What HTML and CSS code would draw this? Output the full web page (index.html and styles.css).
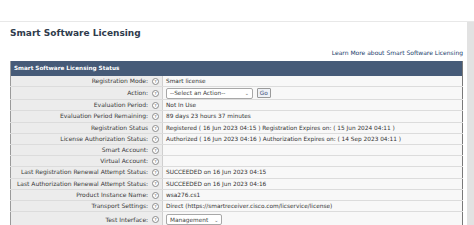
FILE: index.html
```html
<!DOCTYPE html>
<html>
<head>
    <title>Smart Software Licensing</title>
    <link rel="stylesheet" href="styles.css">
</head>
<body>
    <div class="topbar"></div>
    <div class="page">
        <div class="main">
            <h2 class="title">Smart Software Licensing</h2>
            <div class="learn-more"><a href="#">Learn More about Smart Software Licensing</a></div>
            <table class="status-table">
                <tr><th colspan="2" class="table-head">Smart Software Licensing Status</th></tr>
                <tr>
                    <td class="label">Registration Mode: <span class="help">?</span></td>
                    <td class="value">Smart license</td>
                </tr>
                <tr class="select-row">
                    <td class="label">Action: <span class="help">?</span></td>
                    <td class="value">
                        <span class="select action-select">--Select an Action--<span class="caret">&#8964;</span></span>
                        <span class="go-btn">Go</span>
                    </td>
                </tr>
                <tr>
                    <td class="label">Evaluation Period: <span class="help">?</span></td>
                    <td class="value">Not In Use</td>
                </tr>
                <tr>
                    <td class="label">Evaluation Period Remaining: <span class="help">?</span></td>
                    <td class="value">89 days 23 hours 37 minutes</td>
                </tr>
                <tr>
                    <td class="label">Registration Status <span class="help">?</span></td>
                    <td class="value">Registered ( 16 Jun 2023 04:15 ) Registration Expires on: ( 15 Jun 2024 04:11 )</td>
                </tr>
                <tr>
                    <td class="label">License Authorization Status: <span class="help">?</span></td>
                    <td class="value">Authorized ( 16 Jun 2023 04:16 ) Authorization Expires on: ( 14 Sep 2023 04:11 )</td>
                </tr>
                <tr>
                    <td class="label">Smart Account: <span class="help">?</span></td>
                    <td class="value"></td>
                </tr>
                <tr>
                    <td class="label">Virtual Account: <span class="help">?</span></td>
                    <td class="value"></td>
                </tr>
                <tr>
                    <td class="label">Last Registration Renewal Attempt Status: <span class="help">?</span></td>
                    <td class="value">SUCCEEDED on 16 Jun 2023 04:15</td>
                </tr>
                <tr>
                    <td class="label">Last Authorization Renewal Attempt Status: <span class="help">?</span></td>
                    <td class="value">SUCCEEDED on 16 Jun 2023 04:16</td>
                </tr>
                <tr>
                    <td class="label">Product Instance Name: <span class="help">?</span></td>
                    <td class="value">wsa276.cs1</td>
                </tr>
                <tr>
                    <td class="label">Transport Settings: <span class="help">?</span></td>
                    <td class="value">Direct (https://smartreceiver.cisco.com/licservice/license)</td>
                </tr>
                <tr class="select-row last-select">
                    <td class="label">Test Interface: <span class="help">?</span></td>
                    <td class="value">
                        <span class="select">Management<span class="caret">&#8964;</span></span>
                    </td>
                </tr>
            </table>
        </div>
        <div class="side-strip"></div>
    </div>
</body>
</html>
```

FILE: styles.css
```css
body {
    margin: 0;
    font-family: "DejaVu Sans", Verdana, sans-serif;
    background-color: #ffffff;
    color: #333333;
}

.topbar {
    height: 21px;
    border-bottom: 1px solid #e8e8e8;
}

.page {
    display: flex;
}

.main {
    width: 453px;
    padding-left: 10px;
}

.side-strip {
    width: 7px;
    margin-left: 4px;
    background-color: #e2e2e2;
    min-height: 210px;
}

.title {
    margin: 5px 0 0 0;
    font-size: 9px;
    line-height: 12px;
    font-weight: bold;
    color: #2f3b4c;
}

.learn-more {
    text-align: right;
    margin-top: 10px;
    font-size: 6px;
    line-height: 8px;
}

.learn-more a {
    color: #23406b;
    text-decoration: none;
}

.status-table {
    width: 453px;
    margin-top: 4px;
    border-collapse: collapse;
    border-left: 1px solid #9a9a9a;
    border-right: 1px solid #7a7a7a;
    font-size: 6px;
}

.table-head {
    height: 15px;
    padding: 0 3px;
    background-color: #465b78;
    color: #ffffff;
    font-size: 5.7px;
    line-height: 15px;
    font-weight: bold;
    text-align: left;
}

.status-table td {
    height: 10.2px;
    padding: 0 3px;
    line-height: 8px;
    border-bottom: 1px solid #dcdcdc;
    white-space: nowrap;
}

.label {
    width: 145px;
    text-align: right;
    background-color: #ececec;
    color: #3a3a3a;
    border-right: 1px solid #cfcfcf;
}

.value {
    background-color: #f8f8f8;
    color: #333333;
    font-size: 5.8px;
}

.status-table .select-row td {
    height: 12px;
}

.status-table .last-select td {
    height: 15px;
}

.help {
    display: inline-block;
    width: 5px;
    height: 5px;
    margin-left: 2px;
    border: 1px solid #8a8a8a;
    border-radius: 50%;
    background-color: #ffffff;
    font-size: 4px;
    line-height: 5px;
    text-align: center;
    vertical-align: middle;
    color: #555555;
}

.select {
    display: inline-flex;
    align-items: center;
    justify-content: space-between;
    height: 9px;
    padding: 0 3px;
    border: 1px solid #a8a8a8;
    border-radius: 2px;
    background-color: #ffffff;
    vertical-align: middle;
    color: #444444;
}

.action-select {
    width: 79px;
}

.caret {
    margin-left: 6px;
    font-size: 5px;
    color: #555555;
}

.go-btn {
    display: inline-block;
    height: 8px;
    padding: 0 2px;
    margin-left: 2px;
    border: 1px solid #9a9a9a;
    border-radius: 1px;
    background-color: #eef1f6;
    line-height: 8px;
    vertical-align: middle;
    color: #3a4f7a;
}
```
